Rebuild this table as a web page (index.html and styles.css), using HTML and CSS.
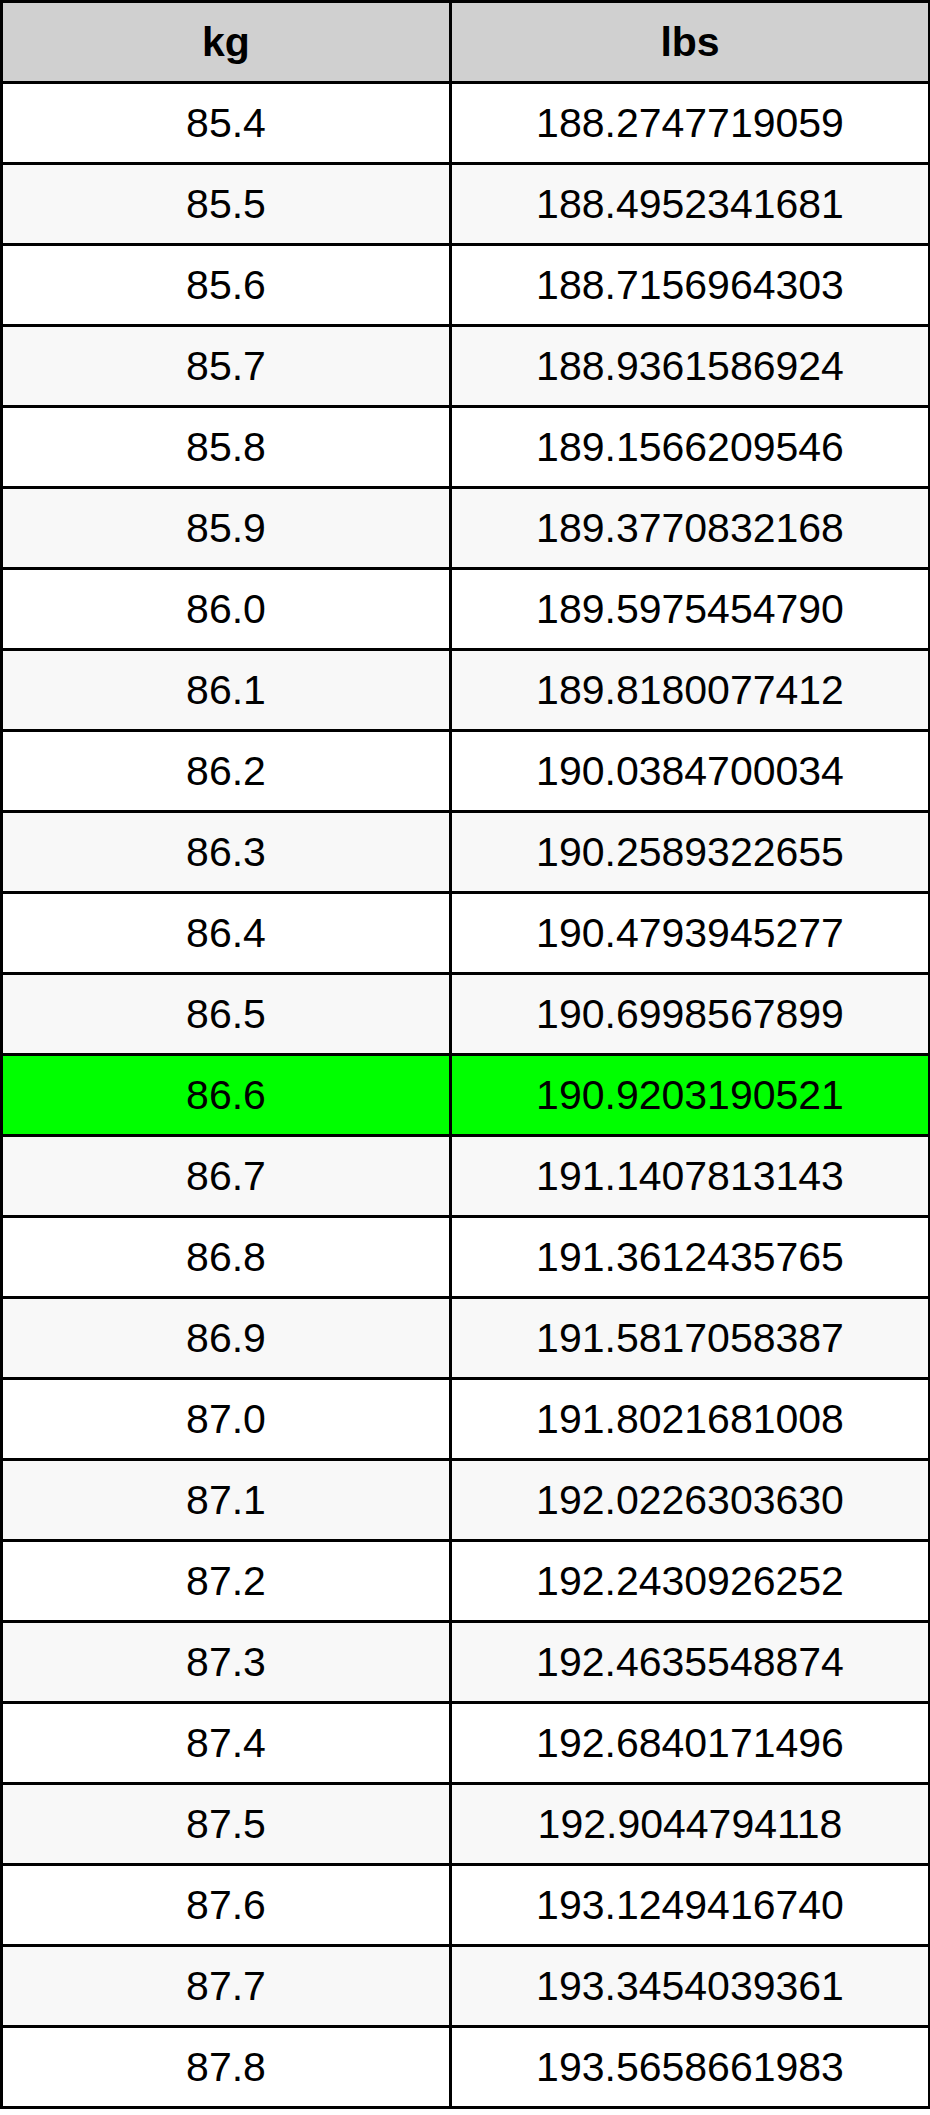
FILE: index.html
```html
<!DOCTYPE html>
<html>
<head>
<meta charset="utf-8">
<link rel="stylesheet" href="styles.css">
</head>
<body>
<table class="conv">
<colgroup><col class="c1"><col class="c2"></colgroup>
<thead>
<tr><th>kg</th><th>lbs</th></tr>
</thead>
<tbody>
<tr><td>85.4</td><td>188.2747719059</td></tr>
<tr><td>85.5</td><td>188.4952341681</td></tr>
<tr><td>85.6</td><td>188.7156964303</td></tr>
<tr><td>85.7</td><td>188.9361586924</td></tr>
<tr><td>85.8</td><td>189.1566209546</td></tr>
<tr><td>85.9</td><td>189.3770832168</td></tr>
<tr><td>86.0</td><td>189.5975454790</td></tr>
<tr><td>86.1</td><td>189.8180077412</td></tr>
<tr><td>86.2</td><td>190.0384700034</td></tr>
<tr><td>86.3</td><td>190.2589322655</td></tr>
<tr><td>86.4</td><td>190.4793945277</td></tr>
<tr><td>86.5</td><td>190.6998567899</td></tr>
<tr class="hl"><td>86.6</td><td>190.9203190521</td></tr>
<tr><td>86.7</td><td>191.1407813143</td></tr>
<tr><td>86.8</td><td>191.3612435765</td></tr>
<tr><td>86.9</td><td>191.5817058387</td></tr>
<tr><td>87.0</td><td>191.8021681008</td></tr>
<tr><td>87.1</td><td>192.0226303630</td></tr>
<tr><td>87.2</td><td>192.2430926252</td></tr>
<tr><td>87.3</td><td>192.4635548874</td></tr>
<tr><td>87.4</td><td>192.6840171496</td></tr>
<tr><td>87.5</td><td>192.9044794118</td></tr>
<tr><td>87.6</td><td>193.1249416740</td></tr>
<tr><td>87.7</td><td>193.3454039361</td></tr>
<tr><td>87.8</td><td>193.5658661983</td></tr>
</tbody>
</table>
</body>
</html>
```
FILE: styles.css
```css
html, body {
  margin: 0;
  padding: 0;
  background: #ffffff;
}
.conv {
  border-collapse: collapse;
  table-layout: fixed;
  width: 928px;
  font-family: "Liberation Sans", Arial, sans-serif;
  font-size: 41px;
  color: #000;
}
.c1 { width: 449px; }
.c2 { width: 479px; }
.conv th, .conv td {
  border: 3px solid #000;
  height: 78px;
  padding: 0;
  text-align: center;
  vertical-align: middle;
  line-height: 46px;
}
.conv th {
  background: #d0d0d0;
  font-weight: bold;
}
.conv tbody tr:nth-child(even) td {
  background: #f8f8f8;
}
.conv tbody tr.hl td {
  background: #00ff00;
}
```
